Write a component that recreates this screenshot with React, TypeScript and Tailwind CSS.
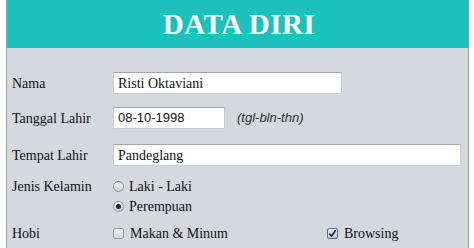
import React from "react";

const serif = "font-['Liberation_Serif',serif]";

function TextBox({ value, width, sans }: { value: string; width: string; sans?: boolean }) {
  return (
    <div
      className={`${width} h-[22px] bg-white border border-[#c9ccd2] border-t-[#a3a6ab] flex items-center px-[4px] text-[#111] ${
        sans ? "font-['Liberation_Sans',sans-serif] text-[13px]" : "text-[14px]"
      }`}
    >
      {value}
    </div>
  );
}

function Radio({ checked, label }: { checked?: boolean; label: string }) {
  return (
    <div className="flex items-center h-[20px]">
      <span className="w-[11px] h-[11px] rounded-full border border-[#8d9096] bg-gradient-to-b from-[#f4f4f4] to-[#d2d4d8] flex items-center justify-center">
        {checked && <span className="w-[5px] h-[5px] rounded-full bg-[#1a1a1a]" />}
      </span>
      <span className="ml-[5px]">{label}</span>
    </div>
  );
}

function Check({ checked, label }: { checked?: boolean; label: string }) {
  return (
    <div className="flex items-center">
      <span
        className={`w-[11px] h-[11px] rounded-[2px] border flex items-center justify-center ${
          checked
            ? "border-[#5b6f86] bg-gradient-to-b from-[#e7eef6] to-[#b9c6d6]"
            : "border-[#9a9da2] bg-gradient-to-b from-[#f5f5f5] to-[#d5d7db]"
        }`}
      >
        {checked && (
          <svg viewBox="0 0 10 10" className="w-[9px] h-[9px]">
            <path d="M1.5 5.2 L4 7.8 L8.6 1.4" fill="none" stroke="#1b2633" strokeWidth="1.8" />
          </svg>
        )}
      </span>
      <span className="ml-[6px]">{label}</span>
    </div>
  );
}

export default function App() {
  return (
    <div className={`w-[474px] h-[248px] bg-white overflow-hidden pl-[6px] pr-[5px] ${serif}`}>
      <div className="h-full border-l border-r border-[#9ea1a6] bg-[#d5d8df] flex flex-col">
        <div className="h-[48px] bg-[#1bc2bd] flex items-center justify-center">
          <h1 className="text-white font-bold text-[29px] leading-none tracking-[0.5px] pl-[3px]">DATA DIRI</h1>
        </div>
        <div className="pl-[5px] pt-[24px] text-[14px] text-[#111]">
          <div className="flex items-center h-[22px]">
            <span className="w-[101px]">Nama</span>
            <TextBox value="Risti Oktaviani" width="w-[229px]" />
          </div>
          <div className="flex items-center h-[22px] mt-[13px]">
            <span className="w-[101px]">Tanggal Lahir</span>
            <TextBox value="08-10-1998" width="w-[112px]" sans />
            <span className="ml-[12px] italic font-medium text-[13px] text-[#2e2e2e] font-['Liberation_Sans',sans-serif]">
              (tgl-bln-thn)
            </span>
          </div>
          <div className="flex items-center h-[22px] mt-[15px]">
            <span className="w-[101px]">Tempat Lahir</span>
            <TextBox value="Pandeglang" width="w-[348px]" />
          </div>
          <div className="flex mt-[10px]">
            <span className="w-[101px] h-[20px] flex items-center">Jenis Kelamin</span>
            <div className="flex flex-col">
              <Radio label="Laki - Laki" />
              <Radio checked label="Perempuan" />
            </div>
          </div>
          <div className="flex items-center h-[20px] mt-[7px]">
            <span className="w-[101px]">Hobi</span>
            <div className="w-[214px]">
              <Check label="Makan & Minum" />
            </div>
            <Check checked label="Browsing" />
          </div>
        </div>
      </div>
    </div>
  );
}
